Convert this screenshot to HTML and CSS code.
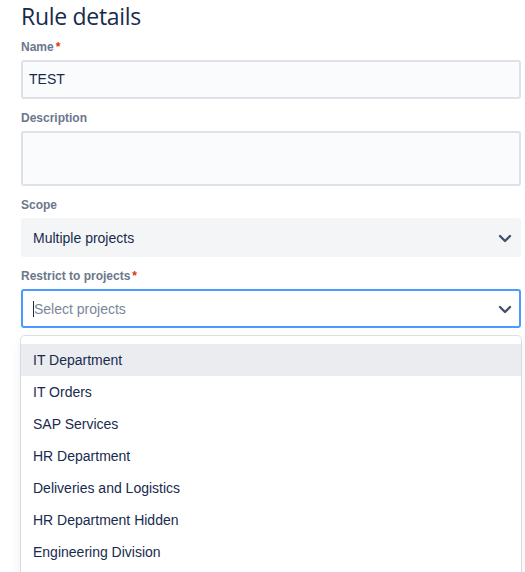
FILE: index.html
```html
<!DOCTYPE html>
<html>
<head>
<meta charset="utf-8">
<link rel="stylesheet" href="styles.css">
</head>
<body>
<div class="page">
  <h1 class="title">Rule details</h1>

  <div class="field">
    <div class="label">Name<span class="req">*</span></div>
    <div class="textfield">TEST</div>
  </div>

  <div class="field">
    <div class="label">Description</div>
    <div class="textarea"></div>
  </div>

  <div class="field">
    <div class="label">Scope</div>
    <div class="select">
      <span class="value">Multiple projects</span>
      <svg class="chev" width="14" height="9" viewBox="0 0 14 9"><polyline points="2,2 7,7 12,2" fill="none" stroke="#42526e" stroke-width="2.4" stroke-linecap="round" stroke-linejoin="round"/></svg>
    </div>
  </div>

  <div class="field">
    <div class="label">Restrict to projects<span class="req">*</span></div>
    <div class="select focused">
      <span class="caret"></span><span class="placeholder">Select projects</span>
      <svg class="chev" width="14" height="9" viewBox="0 0 14 9"><polyline points="2,2 7,7 12,2" fill="none" stroke="#42526e" stroke-width="2.4" stroke-linecap="round" stroke-linejoin="round"/></svg>
    </div>
  </div>

  <div class="menu">
    <div class="option active">IT Department</div>
    <div class="option">IT Orders</div>
    <div class="option">SAP Services</div>
    <div class="option">HR Department</div>
    <div class="option">Deliveries and Logistics</div>
    <div class="option">HR Department Hidden</div>
    <div class="option">Engineering Division</div>
  </div>
</div>
</body>
</html>
```
FILE: styles.css
```css
html, body {
  margin: 0;
  padding: 0;
  background: #ffffff;
}
body {
  font-family: "Liberation Sans", Arial, sans-serif;
  color: #172b4d;
  overflow: hidden;
}
.page {
  padding: 1px 4px 0 21px;
  width: 500px;
}
.title {
  margin: 0;
  font-family: "Open Sans", "Noto Sans", sans-serif;
  font-weight: 400;
  font-size: 23px;
  line-height: 30px;
  color: #172b4d;
  letter-spacing: -0.3px;
}
.field {
  margin-top: 8px;
}
.field + .field {
  margin-top: 11px;
}
.label {
  font-size: 12px;
  font-weight: 700;
  line-height: 16px;
  color: #6b778c;
  margin-bottom: 5px;
}
.req {
  color: #de350b;
  padding-left: 2px;
}
.textfield {
  box-sizing: border-box;
  height: 39px;
  border: 2px solid #dfe1e6;
  border-radius: 3px;
  background: #fafbfc;
  padding: 0 6px;
  font-size: 14px;
  line-height: 35px;
  color: #172b4d;
}
.textarea {
  box-sizing: border-box;
  height: 55px;
  border: 2px solid #dfe1e6;
  border-radius: 3px;
  background: #fafbfc;
}
.select {
  box-sizing: border-box;
  height: 39px;
  border-radius: 3px;
  background: #f4f5f7;
  display: flex;
  align-items: center;
  padding: 0 9px 0 12px;
  font-size: 14px;
}
.select .value {
  flex: 1;
  color: #172b4d;
}
.select.focused {
  background: #ffffff;
  border: 2px solid #4c9aff;
  padding: 0 7px 0 10px;
}
.caret {
  width: 1px;
  height: 16px;
  background: #172b4d;
}
.placeholder {
  flex: 1;
  color: #7a869a;
}
.chev {
  display: block;
  margin-top: 1px;
}
.menu {
  margin-top: 8px;
  border-radius: 4px;
  box-shadow: 0 0 0 1px rgba(9, 30, 66, 0.13), 0 4px 11px rgba(9, 30, 66, 0.08);
  padding: 8px 0 12px;
  background: #ffffff;
}
.option {
  height: 32px;
  line-height: 32px;
  padding-left: 12px;
  font-size: 14px;
  color: #172b4d;
}
.option.active {
  background: #ebecf0;
}
```
